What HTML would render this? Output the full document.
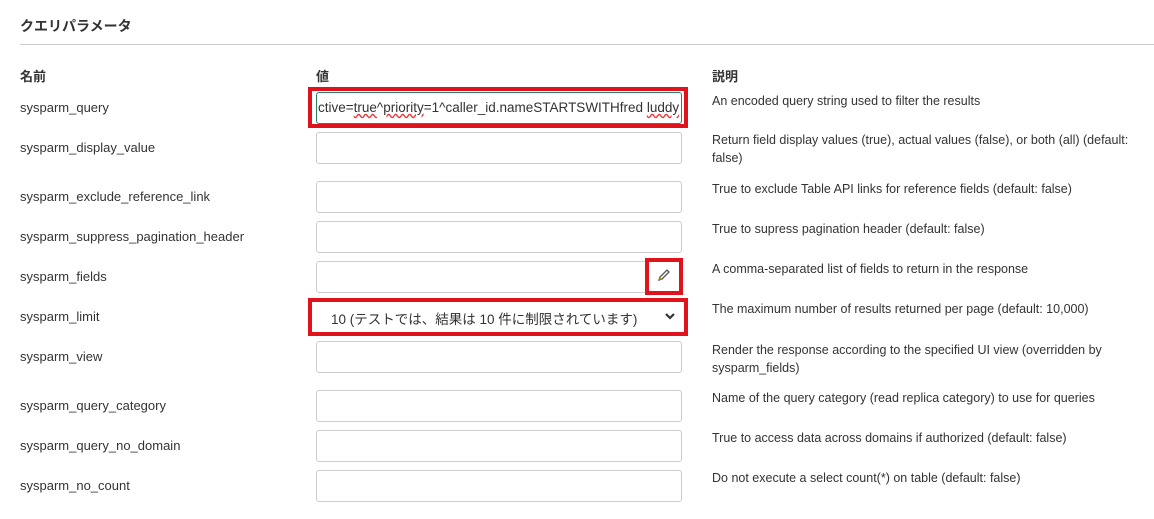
<!DOCTYPE html>
<html><head><meta charset="utf-8"><style>
body{margin:0;width:1154px;height:519px;background:#fff;font-family:"Liberation Sans","Noto Sans CJK JP",sans-serif;color:#333;position:relative;overflow:hidden}
.a{position:absolute;white-space:nowrap}
.t{font-size:13px}
.h{font-weight:bold;font-size:13px}
.in{position:absolute;left:316px;width:364px;height:30px;border:1px solid #ccc;border-radius:3px;background:#fff}
.d{position:absolute;left:712px;width:440px;font-size:12.5px;line-height:18px;color:#333}
.red{position:absolute;border:4px solid #e0131d;box-sizing:border-box}
</style></head><body>
<div class="a" style="left:20px;top:16px;font-size:14px;font-weight:bold;color:#333">クエリパラメータ</div>
<div style="position:absolute;left:20px;top:44px;width:1134px;height:1px;background:#ccc"></div>
<div class="a h" style="left:20px;top:66px">名前</div>
<div class="a h" style="left:316px;top:66px">値</div>
<div class="a h" style="left:712px;top:66px">説明</div>

<div class="a t" style="left:20px;top:100px">sysparm_query</div>
<div class="a t" style="left:20px;top:140px">sysparm_display_value</div>
<div class="a t" style="left:20px;top:189px">sysparm_exclude_reference_link</div>
<div class="a t" style="left:20px;top:229px">sysparm_suppress_pagination_header</div>
<div class="a t" style="left:20px;top:269px">sysparm_fields</div>
<div class="a t" style="left:20px;top:309px">sysparm_limit</div>
<div class="a t" style="left:20px;top:349px">sysparm_view</div>
<div class="a t" style="left:20px;top:398px">sysparm_query_category</div>
<div class="a t" style="left:20px;top:438px">sysparm_query_no_domain</div>
<div class="a t" style="left:20px;top:478px">sysparm_no_count</div>

<div class="in" style="top:92px;border-color:#2e7d6e;overflow:hidden"><div class="a" style="left:1px;top:7px;font-size:13.5px;color:#333">ctive=<span style="text-decoration:underline wavy #e33">true</span>^<span style="text-decoration:underline wavy #e33">priority</span>=1^caller_id.nameSTARTSWITHfred <span style="text-decoration:underline wavy #e33">luddy</span></div></div>
<div class="in" style="top:132px"></div>
<div class="in" style="top:181px"></div>
<div class="in" style="top:221px"></div>
<div class="in" style="top:261px"></div>
<div class="in" style="top:301px;border:none;background:#fff"><div class="a" style="left:15px;top:7px;font-size:13.5px;color:#333">10 (テストでは、結果は 10 件に制限されています)</div>
<svg class="a" style="left:348px;top:11px" width="12" height="10" viewBox="0 0 12 10"><path d="M2 2l4 4 4-4" fill="none" stroke="#333" stroke-width="2.2"/></svg></div>
<div class="in" style="top:341px"></div>
<div class="in" style="top:390px"></div>
<div class="in" style="top:430px"></div>
<div class="in" style="top:470px"></div>

<div class="red" style="left:308px;top:87px;width:380px;height:41px"></div>
<div class="red" style="left:645px;top:258px;width:38px;height:37px;background:#fff"></div>
<svg class="a" style="left:657px;top:268px" width="14" height="14" viewBox="0 0 14 14"><path d="M2 12l1-3 7-7 2 2-7 7z" fill="none" stroke="#555" stroke-width="1.3"/><path d="M2 12l1-3 2 2z" fill="#c90"/></svg>
<div class="red" style="left:308px;top:298px;width:380px;height:38px"></div>

<div class="d" style="top:92px">An encoded query string used to filter the results</div>
<div class="d" style="top:131px">Return field display values (true), actual values (false), or both (all) (default: false)</div>
<div class="d" style="top:180px">True to exclude Table API links for reference fields (default: false)</div>
<div class="d" style="top:220px">True to supress pagination header (default: false)</div>
<div class="d" style="top:260px">A comma-separated list of fields to return in the response</div>
<div class="d" style="top:300px">The maximum number of results returned per page (default: 10,000)</div>
<div class="d" style="top:341px">Render the response according to the specified UI view (overridden by sysparm_fields)</div>
<div class="d" style="top:389px">Name of the query category (read replica category) to use for queries</div>
<div class="d" style="top:429px">True to access data across domains if authorized (default: false)</div>
<div class="d" style="top:469px">Do not execute a select count(*) on table (default: false)</div>
</body></html>
